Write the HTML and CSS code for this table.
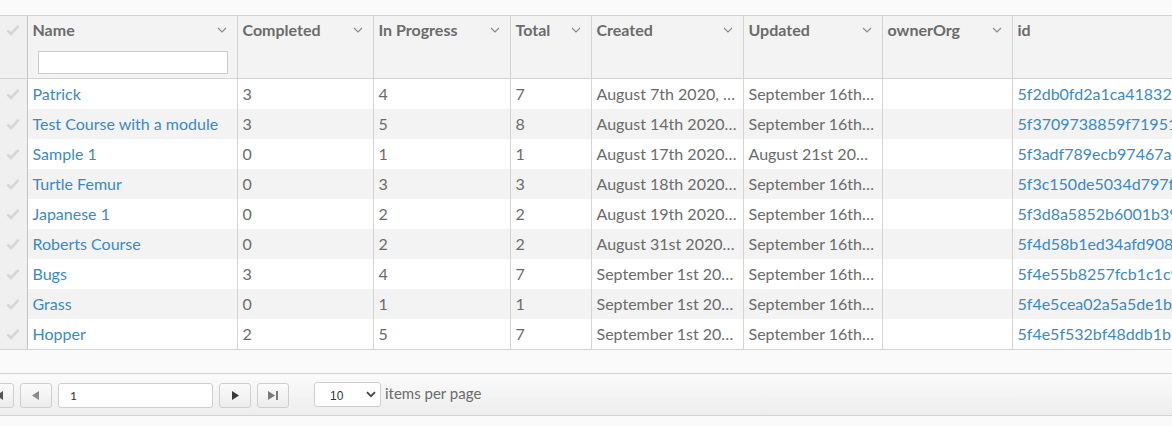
FILE: index.html
```html
<!DOCTYPE html>
<html>
<head>
<meta charset="utf-8">
<link rel="stylesheet" href="styles.css">
</head>
<body>
<div class="page">
  <div class="topgap"></div>
  <div class="grid">
    <table class="tbl">
      <colgroup>
        <col class="c-chk"><col class="c-name"><col class="c-comp"><col class="c-prog"><col class="c-tot"><col class="c-cre"><col class="c-upd"><col class="c-own"><col class="c-id">
      </colgroup>
      <thead>
        <tr>
          <th class="chk"><svg class="tick" viewBox="0 0 14 12" width="14" height="12"><path d="M1.5 6.5 L5 10 L12.5 1.8" fill="none" stroke="#d6d6d6" stroke-width="2.6"/></svg></th>
          <th><div class="hd"><span>Name</span><svg class="chev" viewBox="0 0 10 6" width="10" height="6"><path d="M1 1 L5 5 L9 1" fill="none" stroke="#888" stroke-width="1.1"/></svg></div><input class="filter" type="text"></th>
          <th><div class="hd"><span>Completed</span><svg class="chev" viewBox="0 0 10 6" width="10" height="6"><path d="M1 1 L5 5 L9 1" fill="none" stroke="#888" stroke-width="1.1"/></svg></div></th>
          <th><div class="hd"><span>In Progress</span><svg class="chev" viewBox="0 0 10 6" width="10" height="6"><path d="M1 1 L5 5 L9 1" fill="none" stroke="#888" stroke-width="1.1"/></svg></div></th>
          <th><div class="hd"><span>Total</span><svg class="chev" viewBox="0 0 10 6" width="10" height="6"><path d="M1 1 L5 5 L9 1" fill="none" stroke="#888" stroke-width="1.1"/></svg></div></th>
          <th><div class="hd"><span>Created</span><svg class="chev" viewBox="0 0 10 6" width="10" height="6"><path d="M1 1 L5 5 L9 1" fill="none" stroke="#888" stroke-width="1.1"/></svg></div></th>
          <th><div class="hd"><span>Updated</span><svg class="chev" viewBox="0 0 10 6" width="10" height="6"><path d="M1 1 L5 5 L9 1" fill="none" stroke="#888" stroke-width="1.1"/></svg></div></th>
          <th><div class="hd"><span>ownerOrg</span><svg class="chev" viewBox="0 0 10 6" width="10" height="6"><path d="M1 1 L5 5 L9 1" fill="none" stroke="#888" stroke-width="1.1"/></svg></div></th>
          <th><div class="hd"><span>id</span></div></th>
        </tr>
      </thead>
      <tbody>
        <tr><td class="chk"><svg class="tick" viewBox="0 0 14 12" width="14" height="12"><path d="M1.5 6.5 L5 10 L12.5 1.8" fill="none" stroke="#d6d6d6" stroke-width="2.6"/></svg></td><td class="lnk">Patrick</td><td class="num">3</td><td class="num">4</td><td class="num">7</td><td>August 7th 2020, 10:21:32 am</td><td>September 16th 2020, 1:02:11 pm</td><td></td><td class="lnk">5f2db0fd2a1ca4183222b1a0</td></tr>
        <tr><td class="chk"><svg class="tick" viewBox="0 0 14 12" width="14" height="12"><path d="M1.5 6.5 L5 10 L12.5 1.8" fill="none" stroke="#d6d6d6" stroke-width="2.6"/></svg></td><td class="lnk">Test Course with a module</td><td class="num">3</td><td class="num">5</td><td class="num">8</td><td>August 14th 2020, 3:14:00 pm</td><td>September 16th 2020, 1:02:11 pm</td><td></td><td class="lnk">5f3709738859f719513c0c21</td></tr>
        <tr><td class="chk"><svg class="tick" viewBox="0 0 14 12" width="14" height="12"><path d="M1.5 6.5 L5 10 L12.5 1.8" fill="none" stroke="#d6d6d6" stroke-width="2.6"/></svg></td><td class="lnk">Sample 1</td><td class="num">0</td><td class="num">1</td><td class="num">1</td><td>August 17th 2020, 9:48:25 am</td><td>August 21st 2020, 4:15:33 pm</td><td></td><td class="lnk">5f3adf789ecb97467ad1a0c2</td></tr>
        <tr><td class="chk"><svg class="tick" viewBox="0 0 14 12" width="14" height="12"><path d="M1.5 6.5 L5 10 L12.5 1.8" fill="none" stroke="#d6d6d6" stroke-width="2.6"/></svg></td><td class="lnk">Turtle Femur</td><td class="num">0</td><td class="num">3</td><td class="num">3</td><td>August 18th 2020, 2:30:11 pm</td><td>September 16th 2020, 1:02:11 pm</td><td></td><td class="lnk">5f3c150de5034d797f0a8e31</td></tr>
        <tr><td class="chk"><svg class="tick" viewBox="0 0 14 12" width="14" height="12"><path d="M1.5 6.5 L5 10 L12.5 1.8" fill="none" stroke="#d6d6d6" stroke-width="2.6"/></svg></td><td class="lnk">Japanese 1</td><td class="num">0</td><td class="num">2</td><td class="num">2</td><td>August 19th 2020, 11:05:14 am</td><td>September 16th 2020, 1:02:11 pm</td><td></td><td class="lnk">5f3d8a5852b6001b39e4c7d0</td></tr>
        <tr><td class="chk"><svg class="tick" viewBox="0 0 14 12" width="14" height="12"><path d="M1.5 6.5 L5 10 L12.5 1.8" fill="none" stroke="#d6d6d6" stroke-width="2.6"/></svg></td><td class="lnk">Roberts Course</td><td class="num">0</td><td class="num">2</td><td class="num">2</td><td>August 31st 2020, 1:40:22 pm</td><td>September 16th 2020, 1:02:11 pm</td><td></td><td class="lnk">5f4d58b1ed34afd9083a1b77</td></tr>
        <tr><td class="chk"><svg class="tick" viewBox="0 0 14 12" width="14" height="12"><path d="M1.5 6.5 L5 10 L12.5 1.8" fill="none" stroke="#d6d6d6" stroke-width="2.6"/></svg></td><td class="lnk">Bugs</td><td class="num">3</td><td class="num">4</td><td class="num">7</td><td>September 1st 2020, 10:12:40 am</td><td>September 16th 2020, 1:02:11 pm</td><td></td><td class="lnk">5f4e55b8257fcb1c1c9d2e10</td></tr>
        <tr><td class="chk"><svg class="tick" viewBox="0 0 14 12" width="14" height="12"><path d="M1.5 6.5 L5 10 L12.5 1.8" fill="none" stroke="#d6d6d6" stroke-width="2.6"/></svg></td><td class="lnk">Grass</td><td class="num">0</td><td class="num">1</td><td class="num">1</td><td>September 1st 2020, 10:30:02 am</td><td>September 16th 2020, 1:02:11 pm</td><td></td><td class="lnk">5f4e5cea02a5a5de1b7e3f41</td></tr>
        <tr><td class="chk"><svg class="tick" viewBox="0 0 14 12" width="14" height="12"><path d="M1.5 6.5 L5 10 L12.5 1.8" fill="none" stroke="#d6d6d6" stroke-width="2.6"/></svg></td><td class="lnk">Hopper</td><td class="num">2</td><td class="num">5</td><td class="num">7</td><td>September 1st 2020, 10:45:11 am</td><td>September 16th 2020, 1:02:11 pm</td><td></td><td class="lnk">5f4e5f532bf48ddb1b1a2c03</td></tr>
      </tbody>
    </table>
    <div class="filler"></div>
    <div class="pager">
      <button class="pbtn first"><svg viewBox="0 0 12 12" width="12" height="12"><rect x="1" y="2" width="2" height="9" fill="#555"/><path d="M11 2 L4 6.5 L11 11 Z" fill="#555"/></svg></button>
      <button class="pbtn"><svg viewBox="0 0 12 12" width="12" height="12"><path d="M9 2 L2 6.5 L9 11 Z" fill="#8a8a8a"/></svg></button>
      <input class="pinput" type="text" value="1">
      <button class="pbtn"><svg viewBox="0 0 12 12" width="12" height="12"><path d="M3 2 L10 6.5 L3 11 Z" fill="#3a3a3a"/></svg></button>
      <button class="pbtn"><svg viewBox="0 0 12 12" width="12" height="12"><path d="M1 2 L8 6.5 L1 11 Z" fill="#7a7a7a"/><rect x="9" y="2" width="2" height="9" fill="#7a7a7a"/></svg></button>
      <div class="psel"><span>10</span><svg viewBox="0 0 10 7" width="10" height="7"><path d="M1 1.2 L5 5.2 L9 1.2" fill="none" stroke="#444" stroke-width="1.8"/></svg></div>
      <span class="plabel">items per page</span>
    </div>
  </div>
</div>
</body>
</html>
```

FILE: styles.css
```css
html, body {
  margin: 0;
  padding: 0;
  background: #fafafa;
  overflow: hidden;
}
.page {
  width: 1172px;
  height: 426px;
  overflow: hidden;
  font-family: Lato, "Open Sans", sans-serif;
}
.topgap {
  height: 15px;
}
.grid {
  width: 1300px;
  border-top: 1px solid #d4d4d4;
}
.tbl {
  border-collapse: collapse;
  table-layout: fixed;
  width: 1299px;
}
.c-chk { width: 27px; }
.c-name { width: 210px; }
.c-comp { width: 136px; }
.c-prog { width: 137px; }
.c-tot { width: 81px; }
.c-cre { width: 152px; }
.c-upd { width: 139px; }
.c-own { width: 130px; }
.c-id { width: 287px; }
th {
  background: #f3f3f3;
  height: 62px;
  vertical-align: top;
  text-align: left;
  padding: 0 0 0 5px;
  border-right: 1px solid #d4d4d4;
  border-bottom: 1px solid #d4d4d4;
  font-weight: 700;
  font-size: 16px;
  color: #6b6b6b;
}
.hd {
  display: flex;
  align-items: center;
  justify-content: space-between;
  height: 27px;
  padding-right: 10px;
}
.chev {
  display: block;
  margin-top: 1px;
}
.filter {
  display: block;
  box-sizing: border-box;
  width: 190px;
  height: 23px;
  margin: 8px 0 0 5px;
  border: 1px solid #cccccc;
  background: #fff;
  padding: 0;
}
td {
  height: 29px;
  padding: 0 6px 1px 5px;
  box-sizing: content-box;
  font-size: 16px;
  color: #6b6b6b;
  border-right: 1px solid #d4d4d4;
  white-space: nowrap;
  overflow: hidden;
  text-overflow: ellipsis;
  vertical-align: middle;
}
td.num {
  color: #6b6b6b;
}
tbody tr:nth-child(even) td {
  background: #f3f3f3;
}
tbody tr:nth-child(odd) td {
  background: #ffffff;
}
tbody tr:last-child td {
  border-bottom: 1px solid #d4d4d4;
}
td.chk, th.chk {
  background: #f0f0f0 !important;
  border-right: 1px solid #c4c4c4;
  padding: 0;
  text-align: center;
}
td.chk {
  height: 30px;
}
th.chk {
  vertical-align: top;
}
th.chk .tick {
  margin-top: 8px;
}
.tick {
  display: block;
  margin: 0 auto;
}
td.lnk {
  color: #3b8ac2;
}
.filler {
  height: 23px;
  border-bottom: 1px solid #d4d4d4;
  background: #fafafa;
}
.pager {
  height: 42px;
  box-sizing: border-box;
  border-bottom: 1px solid #d4d4d4;
  background: linear-gradient(#fbfbfb, #ededed);
  display: flex;
  align-items: center;
  gap: 6px;
  padding-left: 0;
}
.pbtn {
  box-sizing: border-box;
  width: 32px;
  height: 25px;
  border: 1px solid #cfcfcf;
  border-radius: 3px;
  background: linear-gradient(#fbfbfb, #ececec);
  display: flex;
  align-items: center;
  justify-content: center;
  padding: 0;
  margin-top: 1px;
}
.pbtn.first {
  margin-left: -18px;
}
.pinput {
  box-sizing: border-box;
  width: 155px;
  height: 25px;
  border: 1px solid #cfcfcf;
  border-radius: 3px;
  background: #fff;
  font-family: Lato, sans-serif;
  font-size: 12px;
  color: #333;
  padding: 0 0 0 11px;
  margin-top: 1px;
}
.psel {
  box-sizing: border-box;
  width: 67px;
  height: 25px;
  margin-left: 19px;
  border: 1px solid #cfcfcf;
  border-radius: 3px;
  background: #fff;
  display: flex;
  align-items: center;
  justify-content: space-between;
  padding: 0 4px 0 15px;
  font-family: Arial, "Liberation Sans", sans-serif;
  font-size: 12px;
  color: #333;
}
.psel span {
  padding-top: 2px;
}
.plabel {
  margin-left: -2px;
  font-size: 15px;
  color: #6b6b6b;
  margin-top: -4px;
}
```
